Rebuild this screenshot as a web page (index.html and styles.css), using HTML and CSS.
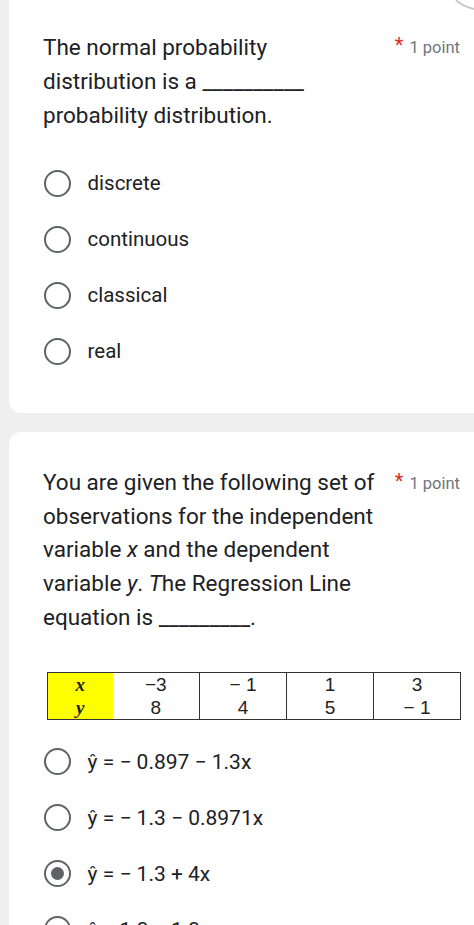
FILE: index.html
```html
<!DOCTYPE html>
<html lang="en">
<head>
<meta charset="utf-8">
<title>Quiz</title>
<link rel="stylesheet" href="styles.css">
</head>
<body>
<div class="page">
  <svg class="corner-arc" width="20" height="14" viewBox="0 0 20 14"><path d="M2 0 Q8 6 20 9" fill="none" stroke="#c9c9c9" stroke-width="2"/></svg>
  <section class="card card-first">
    <div class="q-head">
      <div class="q-text">The normal probability<br>distribution is a __________<br>probability distribution.</div>
      <div class="q-meta"><span class="req">*</span><span class="pts">1 point</span></div>
    </div>
    <div class="options">
      <div class="opt"><span class="radio"></span><span class="label">discrete</span></div>
      <div class="opt"><span class="radio"></span><span class="label">continuous</span></div>
      <div class="opt"><span class="radio"></span><span class="label">classical</span></div>
      <div class="opt"><span class="radio"></span><span class="label">real</span></div>
    </div>
  </section>
  <section class="card card-second">
    <div class="q-head">
      <div class="q-text">You are given the following set of<br>observations for the independent<br>variable <i>x</i> and the dependent<br>variable <i>y</i>. <i>T</i>he Regression Line<br>equation is _________.</div>
      <div class="q-meta small"><span class="req">*</span><span class="pts">1 point</span></div>
    </div>
    <table class="data">
      <colgroup><col class="c-hd"><col class="c-v"><col class="c-v"><col class="c-v"><col class="c-v"></colgroup>
      <tr><td class="hd">x</td><td>−3</td><td class="sep">− 1</td><td class="sep">1</td><td class="sep">3</td></tr>
      <tr><td class="hd">y</td><td>8</td><td class="sep">4</td><td class="sep">5</td><td class="sep">− 1</td></tr>
    </table>
    <div class="options options-eq">
      <div class="opt"><span class="radio"></span><span class="label eq">ŷ = − 0.897 − 1.3x</span></div>
      <div class="opt"><span class="radio"></span><span class="label eq">ŷ = − 1.3 − 0.8971x</span></div>
      <div class="opt"><span class="radio checked"></span><span class="label eq">ŷ = − 1.3 + 4x</span></div>
      <div class="opt"><span class="radio"></span><span class="label eq">ŷ = 1.3 − 1.3x</span></div>
    </div>
  </section>
</div>
</body>
</html>
```

FILE: styles.css
```css
html, body {
  margin: 0;
  padding: 0;
  height: 925px;
  overflow: hidden;
  background: #efefef;
}
body {
  font-family: Roboto, "Noto Sans", Arial, sans-serif;
  color: #202124;
}
.page {
  position: relative;
  padding-left: 9px;
}
.corner-arc {
  position: absolute;
  top: 0;
  right: 0;
}
.card {
  background: #ffffff;
  padding-left: 34px;
  padding-right: 14px;
}
.card-first {
  padding-top: 30px;
  padding-bottom: 34px;
  border-radius: 0 0 0 12px;
}
.card-second {
  margin-top: 19px;
  padding-top: 34px;
  border-radius: 12px 0 0 0;
}
.q-head {
  display: flex;
  justify-content: space-between;
  align-items: flex-start;
}
.q-text {
  font-size: 22.5px;
  line-height: 34px;
  white-space: nowrap;
}
.card-second .q-text {
  line-height: 33.7px;
}
.q-meta {
  display: flex;
  align-items: center;
  gap: 6px;
  height: 34px;
  font-size: 16.5px;
  color: #70757a;
}
.q-meta.small {
  font-size: 16.5px;
  gap: 6px;
}
.req {
  color: #d93025;
  font-size: 20px;
  position: relative;
  top: -2px;
}
.options {
  margin-top: 23px;
  display: flex;
  flex-direction: column;
}
.options-eq {
  margin-top: 14px;
}
.opt {
  display: flex;
  align-items: center;
  height: 56px;
}
.radio {
  box-sizing: border-box;
  width: 27px;
  height: 27px;
  border: 2px solid #5f6368;
  border-radius: 50%;
  margin-left: 0.5px;
  margin-right: 17px;
  display: flex;
  align-items: center;
  justify-content: center;
  flex: none;
}
.radio.checked::after {
  content: "";
  width: 13px;
  height: 13px;
  border-radius: 50%;
  background: #5f6368;
}
.label {
  font-size: 20.5px;
  white-space: nowrap;
}
.label.eq {
  font-size: 21px;
}
.data {
  margin-top: 37px;
  margin-left: 4px;
  width: 413px;
  box-sizing: border-box;
  border-collapse: collapse;
  border: 1.5px solid #333;
  font-family: "Liberation Sans", Arial, sans-serif;
  font-size: 19px;
  color: #222;
  table-layout: fixed;
}
.c-hd { width: 65px; }
.c-v { width: 87px; }
.data td {
  height: 23px;
  padding: 0;
  text-align: center;
  line-height: 23px;
}
.data td.hd {
  background: #ffff00;
  font-family: "Liberation Serif", "Times New Roman", serif;
  font-style: italic;
  font-weight: bold;
  font-size: 19px;
}
.data td.sep {
  border-left: 1.5px solid #333;
}
```
